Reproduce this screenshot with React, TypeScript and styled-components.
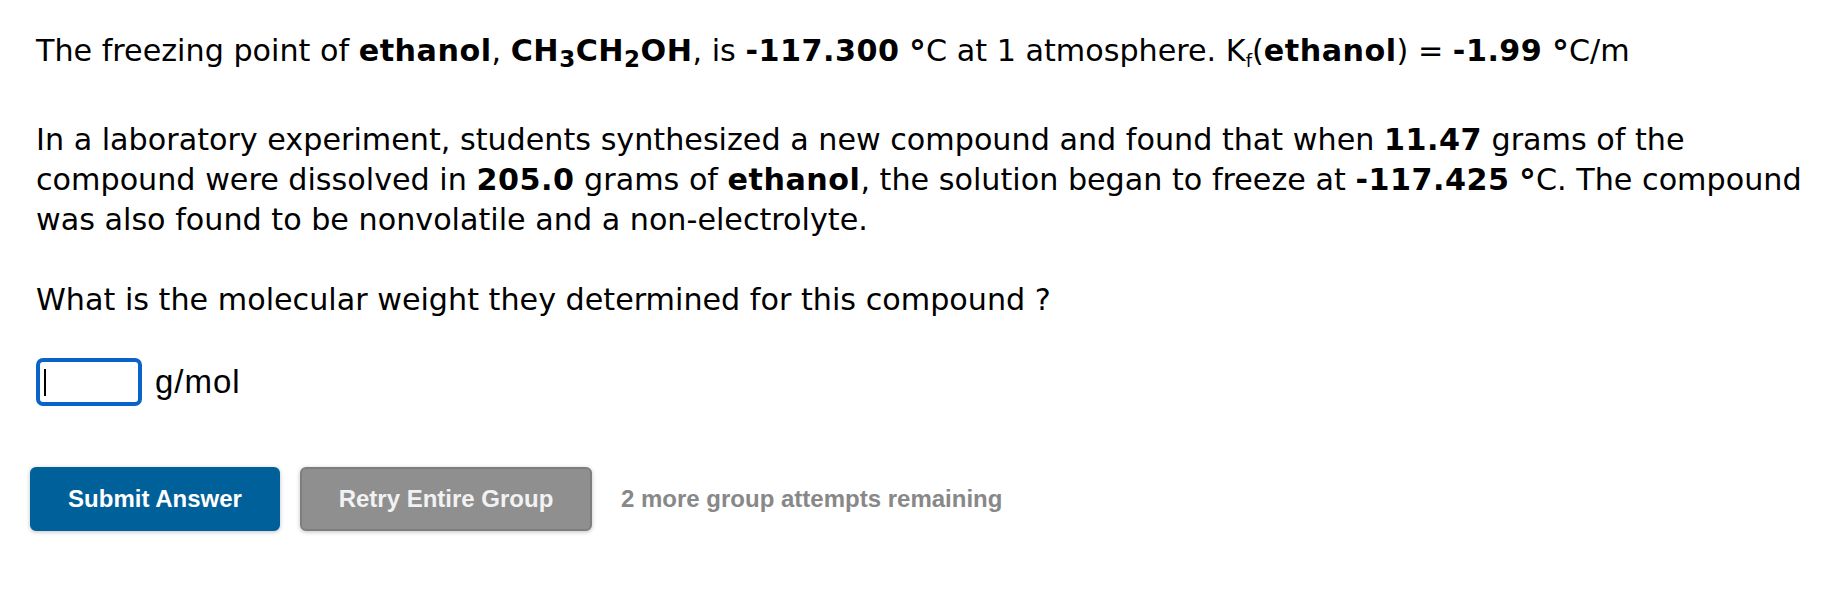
import React from "react";
import styled, { createGlobalStyle } from "styled-components";

const Global = createGlobalStyle`
  html, body { margin: 0; padding: 0; background: #ffffff; }
  body { width: 1841px; height: 601px; overflow: hidden; }
`;

const Page = styled.div`
  padding: 31px 0 0 36px;
  font-family: "DejaVu Sans", Verdana, sans-serif;
  font-size: 30.2px;
  line-height: 40px;
  color: #000;
`;

const Para = styled.p<{ $gap: number }>`
  margin: 0 0 ${(p) => p.$gap}px 0;
  white-space: nowrap;
`;

const B = styled.b`
  font-weight: bold;
  letter-spacing: 0.5px;
`;

const Deg = styled.span`
  font-weight: bold;
  font-size: 34px;
  line-height: 0;
  vertical-align: -3px;
`;

const Sub = styled.sub<{ $small?: boolean }>`
  font-size: ${(p) => (p.$small ? "18px" : "23px")};
  line-height: 0;
  vertical-align: -6px;
`;

const AnswerRow = styled.div`
  display: flex;
  align-items: center;
  gap: 13px;
  margin-top: 38px;
`;

const AnswerBox = styled.div`
  box-sizing: border-box;
  width: 106px;
  height: 48px;
  border: 4px solid #0b63c9;
  border-radius: 7px;
  display: flex;
  align-items: center;
  padding-left: 4px;
`;

const Caret = styled.span`
  display: block;
  width: 2px;
  height: 27px;
  background: #000;
`;

const Unit = styled.span`
  font-family: "Liberation Sans", Arial, sans-serif;
  font-size: 33px;
  letter-spacing: 1px;
  line-height: 40px;
`;

const ButtonRow = styled.div`
  display: flex;
  align-items: center;
  margin-top: 61px;
  margin-left: -6px;
`;

const Button = styled.button<{ $variant: "primary" | "muted" }>`
  box-sizing: border-box;
  height: 64px;
  width: ${(p) => (p.$variant === "primary" ? "250px" : "292px")};
  margin-right: ${(p) => (p.$variant === "primary" ? "20px" : "29px")};
  border-radius: 6px;
  border: 2px solid ${(p) => (p.$variant === "primary" ? "#00609a" : "#7e7e7e")};
  background: ${(p) => (p.$variant === "primary" ? "#00609a" : "#8f8f8f")};
  color: ${(p) => (p.$variant === "primary" ? "#ffffff" : "#f2f2f2")};
  font-family: "Liberation Sans", Arial, sans-serif;
  font-weight: bold;
  font-size: 24px;
  box-shadow: 0 1px 4px rgba(0, 0, 0, 0.25);
  padding: 0;
  cursor: pointer;
`;

const Remaining = styled.span`
  font-family: "Liberation Sans", Arial, sans-serif;
  font-weight: bold;
  font-size: 24px;
  color: #888888;
`;

export default function App() {
  return (
    <>
      <Global />
      <Page>
        <Para $gap={49}>
          The freezing point of <B>ethanol</B>, <B>CH<Sub>3</Sub>CH<Sub>2</Sub>OH</B>, is{" "}
          <B>-117.300</B> <Deg>°</Deg>C at 1 atmosphere. K<Sub $small>f</Sub>(<B>ethanol</B>) = <B>-1.99</B>{" "}
          <Deg>°</Deg>C/m
        </Para>
        <Para $gap={40}>
          In a laboratory experiment, students synthesized a new compound and found that when <B>11.47</B> grams of the
          <br />
          compound were dissolved in <B>205.0</B> grams of <B>ethanol</B>, the solution began to freeze at{" "}
          <B>-117.425</B> <Deg>°</Deg>C. The compound
          <br />
          was also found to be nonvolatile and a non-electrolyte.
        </Para>
        <Para $gap={0}>What is the molecular weight they determined for this compound ?</Para>
        <AnswerRow>
          <AnswerBox role="textbox" aria-label="answer">
            <Caret />
          </AnswerBox>
          <Unit>g/mol</Unit>
        </AnswerRow>
        <ButtonRow>
          <Button $variant="primary">Submit Answer</Button>
          <Button $variant="muted">Retry Entire Group</Button>
          <Remaining>2 more group attempts remaining</Remaining>
        </ButtonRow>
      </Page>
    </>
  );
}
